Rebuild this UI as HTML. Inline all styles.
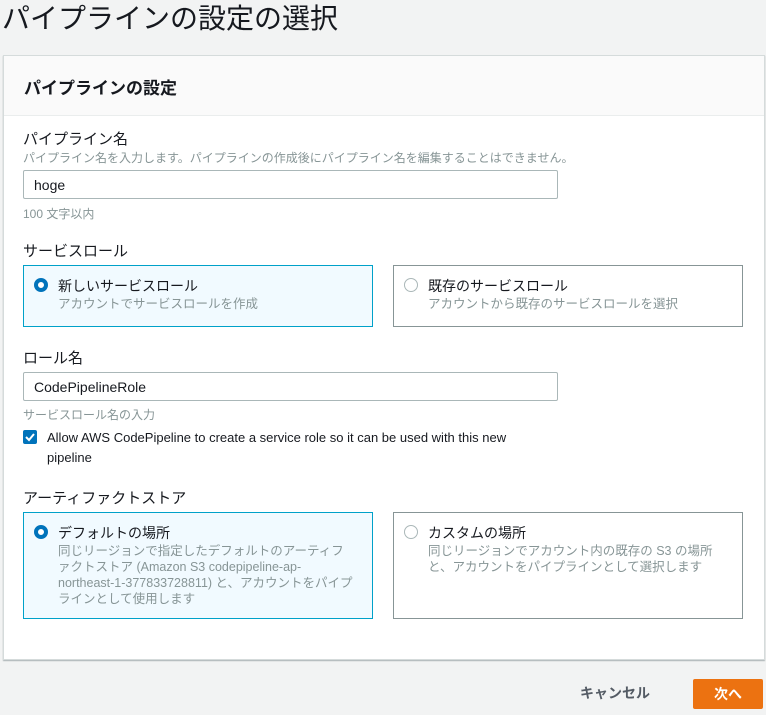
<!DOCTYPE html>
<html><head><meta charset="utf-8"><style>
body{margin:0;width:766px;height:715px;background:#f2f3f3;font-family:"Liberation Sans","Noto Sans CJK JP",sans-serif;color:#16191f;position:relative;overflow:hidden}
.a{position:absolute;white-space:nowrap}
.panel{position:absolute;left:3px;top:55px;width:760px;height:603px;background:#fff;border:1px solid #d5dbdb;box-shadow:0 1px 1px rgba(0,28,36,.3)}
.hdr{position:absolute;left:0;top:0;right:0;height:59px;background:#fafafa;border-bottom:1px solid #eaeded}
.inp{position:absolute;left:23px;width:535px;height:29px;border:1px solid #aab7b8;border-radius:2px;background:#fff;font-size:14px;line-height:28px;padding-left:10px;box-sizing:border-box}
.lbl{font-size:15px;color:#16191f}
.sm{font-size:12px;color:#879596}
.card{position:absolute;box-sizing:border-box;border:1px solid #879596;background:#fff}
.card.sel{border-color:#00a1c9;background:#f1faff}
.rad{position:absolute;left:10px;top:12px;width:14px;height:14px;border-radius:50%;box-sizing:border-box;border:1px solid #aab7b8;background:#fff}
.sel .rad{border:4px solid #0073bb}
.ct{position:absolute;left:34px;top:10px;font-size:14px}
.cd{position:absolute;left:34px;top:30px;font-size:12.5px;color:#879596;line-height:16px;white-space:normal}
</style></head><body>
<div class="a" style="left:2px;top:0;font-size:28px;line-height:38px">パイプラインの設定の選択</div>
<div class="panel">
 <div class="hdr"><div class="a" style="left:20px;top:18px;font-size:17px;font-weight:bold">パイプラインの設定</div></div>
</div>
<div class="a lbl" style="left:23px;top:128px">パイプライン名</div>
<div class="a sm" style="left:23px;top:149px">パイプライン名を入力します。パイプラインの作成後にパイプライン名を編集することはできません。</div>
<div class="inp" style="top:170px">hoge</div>
<div class="a sm" style="left:23px;top:205px">100 文字以内</div>
<div class="a lbl" style="left:23px;top:240px">サービスロール</div>
<div class="card sel" style="left:23px;top:265px;width:350px;height:62px"><div class="rad"></div><div class="ct">新しいサービスロール</div><div class="cd">アカウントでサービスロールを作成</div></div>
<div class="card" style="left:393px;top:265px;width:350px;height:62px"><div class="rad"></div><div class="ct">既存のサービスロール</div><div class="cd">アカウントから既存のサービスロールを選択</div></div>
<div class="a lbl" style="left:23px;top:347px">ロール名</div>
<div class="inp" style="top:372px">CodePipelineRole</div>
<div class="a sm" style="left:23px;top:406px">サービスロール名の入力</div>
<div class="a" style="left:23px;top:430px;width:14px;height:14px;background:#0073bb;border-radius:2px"><svg width="14" height="14"><path d="M3 7l3 3 5-6" stroke="#fff" stroke-width="2" fill="none"/></svg></div>
<div class="a" style="left:47px;top:428px;font-size:13px;line-height:20px;white-space:normal;width:500px">Allow AWS CodePipeline to create a service role so it can be used with this new pipeline</div>
<div class="a lbl" style="left:23px;top:487px">アーティファクトストア</div>
<div class="card sel" style="left:23px;top:512px;width:350px;height:107px"><div class="rad"></div><div class="ct">デフォルトの場所</div><div class="cd" style="width:296px">同じリージョンで指定したデフォルトのアーティファクトストア (Amazon S3 codepipeline-ap-northeast-1-377833728811) と、アカウントをパイプラインとして使用します</div></div>
<div class="card" style="left:393px;top:512px;width:350px;height:107px"><div class="rad"></div><div class="ct">カスタムの場所</div><div class="cd" style="width:296px">同じリージョンでアカウント内の既存の S3 の場所と、アカウントをパイプラインとして選択します</div></div>
<div class="a" style="left:580px;top:683px;font-size:14px;font-weight:bold;color:#545b64">キャンセル</div>
<div class="a" style="left:693px;top:679px;width:70px;height:30px;background:#ec7211;border-radius:2px;color:#fff;font-size:14px;font-weight:bold;text-align:center;line-height:30px">次へ</div>
</body></html>
